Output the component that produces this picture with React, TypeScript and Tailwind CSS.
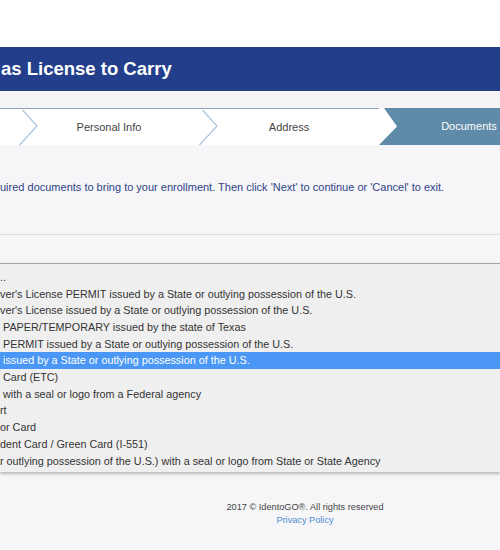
const STEPS = [
  { label: "", active: false },
  { label: "Personal Info", active: false },
  { label: "Address", active: false },
  { label: "Documents", active: true },
];

// visible part of each option; pad = leading space that is still on screen
const OPTIONS: { text: string; pad: boolean; selected?: boolean }[] = [
  { text: "..", pad: false },
  { text: "ver's License PERMIT issued by a State or outlying possession of the U.S.", pad: false },
  { text: "ver's License issued by a State or outlying possession of the U.S.", pad: false },
  { text: "PAPER/TEMPORARY issued by the state of Texas", pad: true },
  { text: "PERMIT issued by a State or outlying possession of the U.S.", pad: true },
  { text: "issued by a State or outlying possession of the U.S.", pad: true, selected: true },
  { text: "Card (ETC)", pad: true },
  { text: "with a seal or logo from a Federal agency", pad: true },
  { text: "rt", pad: false },
  { text: "or Card", pad: false },
  { text: "dent Card / Green Card (I-551)", pad: false },
  { text: "r outlying possession of the U.S.) with a seal or logo from State or State Agency", pad: false },
];

function Chevron({ active }: { active: boolean }) {
  if (active) {
    return (
      <svg width="20" height="37" viewBox="0 0 20 37" className="absolute left-0 top-0">
        <polygon points="0,0 5,0 18,18.5 0,37" fill="#ffffff" />
      </svg>
    );
  }
  return (
    <svg width="20" height="37" viewBox="0 0 20 37" className="absolute left-0 top-0">
      <polyline points="3.5,1 18,17 0.5,36" fill="none" stroke="#aec7de" strokeWidth="1.3" />
    </svg>
  );
}

export default function App() {
  return (
    <div className="w-[500px] h-[550px] overflow-hidden bg-[#f6f6f8] font-['Liberation_Sans',Arial,sans-serif]">
      <div className="h-[47px] bg-white" />

      {/* Header */}
      <div className="h-[44px] bg-[#233f8c] flex items-center">
        <h1 className="text-[18.5px] font-bold text-white leading-none whitespace-nowrap pl-[1px]">
          as License to Carry
        </h1>
      </div>
      <div className="h-[17px] bg-[#f4f4f7]" />

      {/* Steps */}
      <div className="h-[37px] flex ml-[-161px]">
        {STEPS.map((s, i) => (
          <div
            key={i}
            className={`relative shrink-0 w-[180px] h-[37px] flex items-center justify-center text-[11px] ${
              s.active ? "bg-[#5f8aa8] text-white" : "bg-white text-[#444] border-t border-[#8fa2b9]"
            }`}
          >
            <Chevron active={s.active} />
            {s.label && <span className="whitespace-nowrap">{s.label}</span>}
          </div>
        ))}
      </div>

      {/* Instructions */}
      <div className="pt-[35px]">
        <p className="text-[11px] leading-[14px] text-[#2f4387] whitespace-nowrap">
          uired documents to bring to your enrollment. Then click 'Next' to continue or 'Cancel' to exit.
        </p>
      </div>
      <div className="mt-[40px] border-t border-[#dedee0]" />

      {/* Document list */}
      <div className="mt-[28px] border-t border-[#a3a3a3] bg-[#efefef] pt-[5px] pb-[3px] shadow-[0_2px_3px_rgba(0,0,0,0.25)]">
        {OPTIONS.map((o) => (
          <div
            key={o.text}
            className={`h-[16.7px] flex items-center text-[10.8px] leading-none whitespace-nowrap ${
              o.pad ? "pl-[3px]" : ""
            } ${o.selected ? "bg-[#4a97f5] text-white" : "text-[#333]"}`}
          >
            {o.text}
          </div>
        ))}
      </div>

      {/* Footer */}
      <div className="pt-[29px] pl-[110px] text-center text-[9.2px] leading-[13px]">
        <p className="text-[#444]">2017 © IdentoGO®. All rights reserved</p>
        <a className="text-[#4a8ccf]">Privacy Policy</a>
      </div>
    </div>
  );
}
